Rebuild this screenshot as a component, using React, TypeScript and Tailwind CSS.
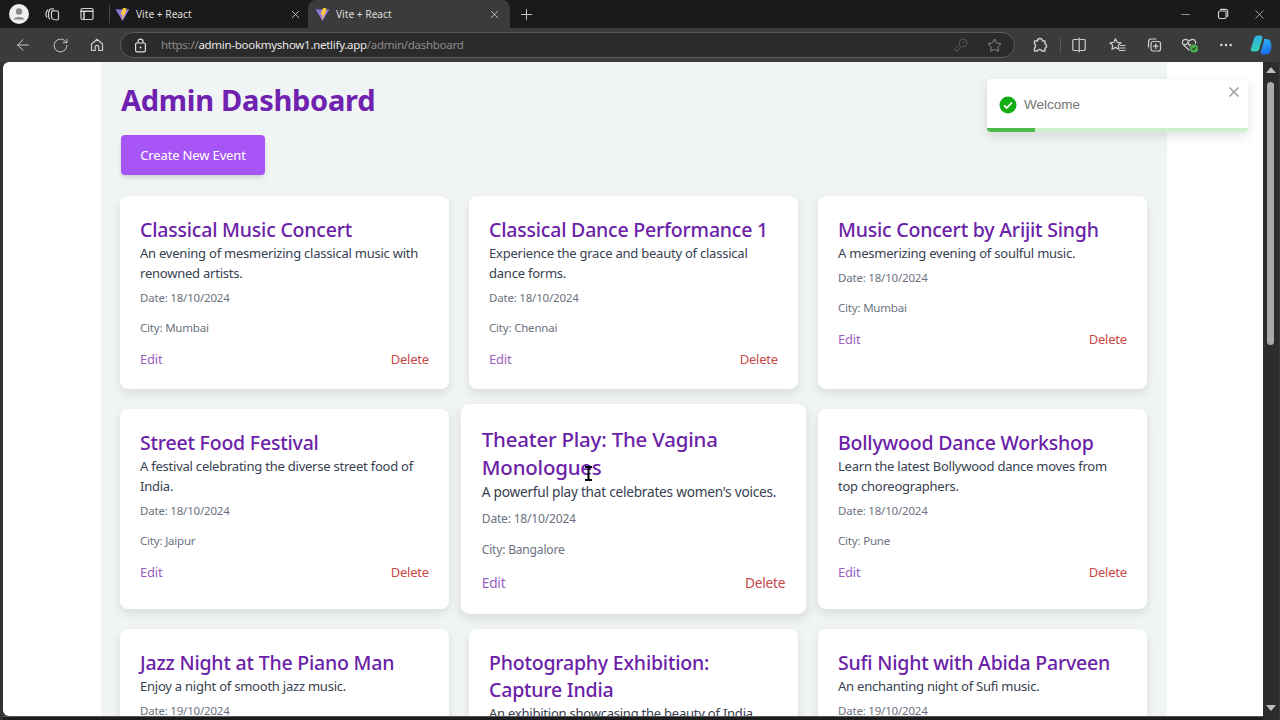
import React from "react";
import { ArrowLeft, RotateCw, Plus, Minus, X, Star, KeyRound, Ellipsis } from "lucide-react";

type Ev = { t: string; d: string; date: string; city: string; hover?: boolean };
const rows: Ev[] = [
  { t: "Classical Music Concert", d: "An evening of mesmerizing classical music with renowned artists.", date: "18/10/2024", city: "Mumbai" },
  { t: "Classical Dance Performance 1", d: "Experience the grace and beauty of classical dance forms.", date: "18/10/2024", city: "Chennai" },
  { t: "Music Concert by Arijit Singh", d: "A mesmerizing evening of soulful music.", date: "18/10/2024", city: "Mumbai" },
  { t: "Street Food Festival", d: "A festival celebrating the diverse street food of India.", date: "18/10/2024", city: "Jaipur" },
  { t: "Theater Play: The Vagina Monologues", d: "A powerful play that celebrates women's voices.", date: "18/10/2024", city: "Bangalore", hover: true },
  { t: "Bollywood Dance Workshop", d: "Learn the latest Bollywood dance moves from top choreographers.", date: "18/10/2024", city: "Pune" },
  { t: "Jazz Night at The Piano Man", d: "Enjoy a night of smooth jazz music.", date: "19/10/2024", city: "Delhi" },
  { t: "Photography Exhibition: Capture India", d: "An exhibition showcasing the beauty of India.", date: "19/10/2024", city: "Delhi" },
  { t: "Sufi Night with Abida Parveen", d: "An enchanting night of Sufi music.", date: "19/10/2024", city: "Delhi" },
];

function Card({ e }: { e: Ev }) {
  return (
    <div className={`bg-white rounded-lg shadow-[0_4px_10px_rgba(0,0,0,0.1)] p-5 ${e.hover ? "scale-105 relative" : ""}`}>
      <h2 className="text-[19.5px] leading-[27px] font-medium text-[#6b21a8] tracking-[-0.2px]">{e.t}</h2>
      <p className="text-[13px] leading-[20px] text-[#374151] tracking-[-0.23px]">{e.d}</p>
      <p className="text-[11.5px] leading-[16px] text-[#6b7280] mt-[7px] tracking-[-0.2px]">Date: {e.date}</p>
      <p className="text-[11.5px] leading-[16px] text-[#6b7280] mt-[14px] tracking-[-0.2px]">City: {e.city}</p>
      <div className="flex justify-between mt-[13px] text-[13px] leading-[20px] tracking-[-0.2px]">
        <span className="text-[#9b5fc0]">Edit</span>
        <span className="text-[#c84848]">Delete</span>
      </div>
    </div>
  );
}

function Vite() {
  return (
    <svg width="15" height="15" viewBox="0 0 16 16" className="shrink-0">
      <path d="M0.5 2 L8 15 L15.5 2 L11 3 L8 2.6 L4 2.6 Z" fill="#8f78e0" />
      <path d="M8.6 1 L12.8 1.2 L10.8 3 L12.6 3 L7.4 14 L8 8 L5.8 8 Z" fill="#ffca3a" />
    </svg>
  );
}

const S = { fill: "none", stroke: "#cfcfcf", strokeWidth: 1.2, strokeLinecap: "round", strokeLinejoin: "round" } as const;

function Slot({ w, children }: { w: string; children: React.ReactNode }) {
  return <div className={`${w} h-full shrink-0 flex items-center justify-center`}>{children}</div>;
}

function TabItem({ w, active, pl, xr }: { w: string; active?: boolean; pl: string; xr: string }) {
  return (
    <div className={`${w} ${active ? "bg-[#3b3b3b] rounded-t-lg" : ""} ${pl} ${xr} h-full shrink-0 flex items-center`}>
      <Vite />
      <span className="ml-[6px] mt-[1px] text-[10.2px] text-[#dcdcdc] flex-1">Vite + React</span>
      <X size={13} color="#d0d0d0" strokeWidth={1.6} />
    </div>
  );
}

function TabBar() {
  return (
    <div className="h-[28px] bg-[#1a1a1a] flex items-end shrink-0">
      <Slot w="w-[38px]">
        <div className="w-[20px] h-[20px] rounded-full bg-[#efefef] overflow-hidden flex items-center justify-center">
          <svg width="20" height="20" viewBox="0 0 20 20"><circle cx="10" cy="7.5" r="3.2" fill="#8a8a8a" /><path d="M4.5 15.5 C5 12 15 12 15.5 15.5 Z" fill="#8a8a8a" /></svg>
        </div>
      </Slot>
      <Slot w="w-[28px]">
        <svg width="16" height="16" viewBox="0 0 16 16" {...S}>
          <path d="M2.8 11 C1.3 9 1.8 5.5 3.8 4" /><path d="M5.5 13 C3.8 10.5 4.3 5 6.3 3 L9.5 2.8" />
          <path d="M8.5 4.8 H13 Q14.5 5 14.5 6.5 V12.5 Q14.5 14 13 14 L9.5 13.5 Q7.6 13 7.5 11 V6 Q7.5 5 8.5 4.8 Z" />
        </svg>
      </Slot>
      <Slot w="w-[42px]">
        <svg width="16" height="16" viewBox="0 0 16 16" {...S}>
          <rect x="2" y="2.5" width="12" height="11" rx="1.5" /><path d="M2 5.2 H14 M5 5.2 V13.5" strokeWidth="1.6" />
        </svg>
      </Slot>
      <div className="w-px h-[18px] bg-[#4a4a4a] mb-[5px] ml-[1px] shrink-0" />
      <TabItem w="w-[195px]" pl="pl-[5px]" xr="pr-[3px]" />
      <div className="w-[3px] shrink-0" />
      <TabItem w="w-[202px]" active pl="pl-[7px]" xr="pr-[9px]" />
      <Slot w="w-[32px]"><Plus size={17} color="#d8d8d8" strokeWidth={1.3} /></Slot>
      <div className="flex-1" />
      <Slot w="w-[37px]"><Minus size={13} color="#d0d0d0" strokeWidth={1.2} /></Slot>
      <Slot w="w-[37px]">
        <svg width="12" height="12" viewBox="0 0 12 12" {...S}><rect x="1.5" y="3" width="7.5" height="7.5" rx="1.5" /><path d="M3.5 1.3 H8.5 Q10.7 1.3 10.7 3.5 V8.5" /></svg>
      </Slot>
      <Slot w="w-[37px]"><X size={15} color="#d8d8d8" strokeWidth={1.1} /></Slot>
      <div className="w-[2px] shrink-0" />
    </div>
  );
}

function ToolBar() {
  return (
    <div className="h-[34px] bg-[#3b3b3b] flex items-center pl-[3px] shrink-0">
      <Slot w="w-[40px]"><ArrowLeft size={18} color="#dcdcdc" strokeWidth={1.2} /></Slot>
      <Slot w="w-[34px]"><RotateCw size={17} color="#dcdcdc" strokeWidth={1.2} /></Slot>
      <Slot w="w-[40px]">
        <svg width="16" height="16" viewBox="0 0 16 16" {...S}><path d="M2.5 7 L8 2.2 L13.5 7 V13.5 H9.8 V10 Q9.8 8.3 8 8.3 Q6.2 8.3 6.2 10 V13.5 H2.5 Z" /></svg>
      </Slot>
      <div className="w-[3px] shrink-0" />
      <div className="w-[895px] h-[26px] shrink-0 rounded-full bg-[#2b2b2b] border border-[#5a5a5a] flex items-center pl-[13px] pr-[12px]">
        <svg width="13" height="15" viewBox="0 0 13 15" className="shrink-0">
          <rect x="1.6" y="5" width="9.8" height="8.8" rx="1.2" fill="none" stroke="#e0e0e0" strokeWidth="1.2" />
          <path d="M4 5 V3.4 Q4 1.2 6.5 1.2 Q9 1.2 9 3.4 V5" fill="none" stroke="#e0e0e0" strokeWidth="1.2" />
          <circle cx="6.5" cy="9.4" r="1" fill="#e0e0e0" />
        </svg>
        <span className="ml-[14px] text-[11.5px] tracking-[-0.28px] text-[#8b8b8b] flex-1">
          https://<span className="text-[#e8e8e8]">admin-bookmyshow1.netlify.app</span>/admin/dashboard
        </span>
        <KeyRound size={14} color="#707070" strokeWidth={1.2} />
        <Star size={15} color="#a8a8a8" strokeWidth={1.2} className="ml-[19px]" />
      </div>
      <div className="w-[7px] shrink-0" />
      <Slot w="w-[36px]">
        <svg width="16" height="16" viewBox="0 0 16 16" {...S} strokeWidth="1.4">
          <path d="M5.5 4 a2.5 2.5 0 0 1 5 0 h2.5 v2.8 a2.3 2.3 0 0 1 0 4.4 v2.8 h-3 a2.5 2.5 0 0 0 -4.6 0 H2.5 v-3.2 a2.4 2.4 0 0 0 0 -4 V4 Z" />
        </svg>
      </Slot>
      <div className="w-[4px] shrink-0 flex justify-center"><div className="w-px h-[16px] bg-[#5c5c5c]" /></div>
      <Slot w="w-[34px]">
        <svg width="16" height="16" viewBox="0 0 16 16" {...S}><path d="M7 2.5 H3 Q1.8 2.5 1.8 3.7 V12.3 Q1.8 13.5 3 13.5 H7 M9.5 2.5 H13 Q14.2 2.5 14.2 3.7 V12.3 Q14.2 13.5 13 13.5 H9.5 M8.2 1 V15" /></svg>
      </Slot>
      <Slot w="w-[42px]">
        <svg width="17" height="16" viewBox="0 0 17 16" {...S}><path d="M6.5 1.8 L8.2 5.3 L12 5.8 L9.3 8.4 L10 12.2 L6.5 10.4 L3 12.2 L3.7 8.4 L1 5.8 L4.8 5.3 Z" /><path d="M11.5 8.5 H16 M11.5 11 H16 M10.5 13.5 H16" /></svg>
      </Slot>
      <Slot w="w-[32px]">
        <svg width="16" height="16" viewBox="0 0 16 16" {...S}><path d="M2.5 10 V5 Q2.5 2 5.5 2 H10" /><rect x="5" y="4.5" width="9.5" height="9.5" rx="2" /><path d="M9.7 7 V11.5 M7.5 9.2 H12" /></svg>
      </Slot>
      <Slot w="w-[40px]">
        <svg width="18" height="16" viewBox="0 0 18 16">
          <path d="M8 13 L2.2 7.5 Q0.5 5 2.5 3 Q5 1.2 8 4 Q11 1.2 13.5 3 Q15 4.5 14.5 6.5" {...S} />
          <path d="M3 7.5 H5.5 L7 5 L8.5 9 L9.5 7.5" {...S} />
          <circle cx="13" cy="11.5" r="4" fill="#4caf50" />
          <path d="M11.2 11.5 L12.5 12.8 L14.8 10.2" fill="none" stroke="#1f3a20" strokeWidth="1.1" />
        </svg>
      </Slot>
      <Slot w="w-[32px]"><Ellipsis size={16} color="#d8d8d8" strokeWidth={1.8} /></Slot>
      <Slot w="w-[38px]">
        <svg width="22" height="22" viewBox="0 0 22 22">
          <defs>
            <linearGradient id="cpA" x1="0" y1="0" x2="0.3" y2="1"><stop offset="0" stopColor="#2fa8e8" /><stop offset="1" stopColor="#35d0b8" /></linearGradient>
            <linearGradient id="cpB" x1="0" y1="0" x2="0.2" y2="1"><stop offset="0" stopColor="#2fb4f0" /><stop offset="1" stopColor="#1670e8" /></linearGradient>
          </defs>
          <path d="M7.5 1.5 L11 1.5 Q13 2 12.3 4.5 L9 15.5 Q8.3 17.5 6 17.5 L2.5 17.5 Q0.3 17 1 14.5 L4.2 4 Q5 1.7 7.5 1.5 Z" fill="url(#cpA)" />
          <path d="M14 5 L17.5 5 Q20 5.3 20.8 8 Q22.2 13 20.3 17.5 Q19 20.5 16 20.5 L12 20.5 Q10 20 10.8 17.5 L14 7 Z" fill="url(#cpB)" />
        </svg>
      </Slot>
    </div>
  );
}

function Toast() {
  return (
    <div className="absolute left-[987px] top-[79px] w-[261px] h-[53px] bg-white rounded shadow-[0_4px_12px_rgba(0,0,0,0.12)] overflow-hidden [font-family:'Liberation_Sans',sans-serif]">
      <div className="h-[49px] flex items-center pl-[12px]">
        <svg width="18" height="18" viewBox="0 0 18 18" className="mt-[3px]">
          <circle cx="9" cy="9" r="8.5" fill="#13ad13" />
          <path d="M5 9.3 L7.8 12 L13 6.5" fill="none" stroke="#fff" strokeWidth="1.8" />
        </svg>
        <span className="ml-[7px] mt-[4px] text-[13.5px] text-[#757575]">Welcome</span>
      </div>
      <div className="absolute right-[6px] top-[5px]"><X size={16} color="#a3a3a3" strokeWidth={2.6} /></div>
      <div className="h-[4px] bg-[#cdf0cd] flex"><div className="w-[48px] bg-[#4cbb4c]" /></div>
    </div>
  );
}

export default function App() {
  return (
    <div className="relative w-[1280px] h-[720px] overflow-hidden bg-[#1c1c1c] flex flex-col [font-family:'Noto_Sans',sans-serif]">
      <TabBar />
      <ToolBar />
      <div className="flex-1 min-h-0 flex bg-[#333333] pl-[3px]">
        <div className="flex-1 min-h-0 flex flex-col">
          <div className="flex-1 min-h-0 bg-white rounded-l-md overflow-hidden pl-[98px]">
            <div className="w-[1066px] bg-[#f1f4f5] p-5 h-[1000px]">
              <h1 className="text-[29px] leading-[36px] font-bold text-[#6f21b0] tracking-[-0.27px]">Admin Dashboard</h1>
              <button className="block mt-[17px] h-[40px] w-[144px] pt-[2px] rounded bg-[#a855f7] text-white text-[13px] tracking-[-0.15px] shadow-md">Create New Event</button>
              <div className="grid grid-cols-3 gap-5 mt-[21px] -ml-[1px]">
                {rows.map((e) => <Card key={e.t} e={e} />)}
              </div>
            </div>
          </div>
          <div className="h-[4px] shrink-0 bg-[#1c1c1c] border-t border-[#555555]" />
        </div>
        <div className="w-[17px] shrink-0 bg-[#2c2c2c] border-r border-[#3a3a3a] flex flex-col items-center pt-[5px] pr-[1px]">
          <div className="w-0 h-0 border-x-[5px] border-x-transparent border-b-[6px] border-b-[#bdbdbd]" />
          <div className="w-[7px] h-[263px] mt-[9px] bg-[#a8a8a8] rounded-full" />
          <div className="flex-1" />
          <div className="w-0 h-0 border-x-[5px] border-x-transparent border-t-[6px] border-t-[#bdbdbd] mb-[9px]" />
        </div>
      </div>
      <Toast />
      <svg width="9" height="15" viewBox="0 0 9 15" className="absolute left-[584px] top-[466px]">
        <path d="M1 1 H8 M4.5 1 V14 M1 14 H8" stroke="#000" strokeWidth="2" fill="none" />
      </svg>
    </div>
  );
}
